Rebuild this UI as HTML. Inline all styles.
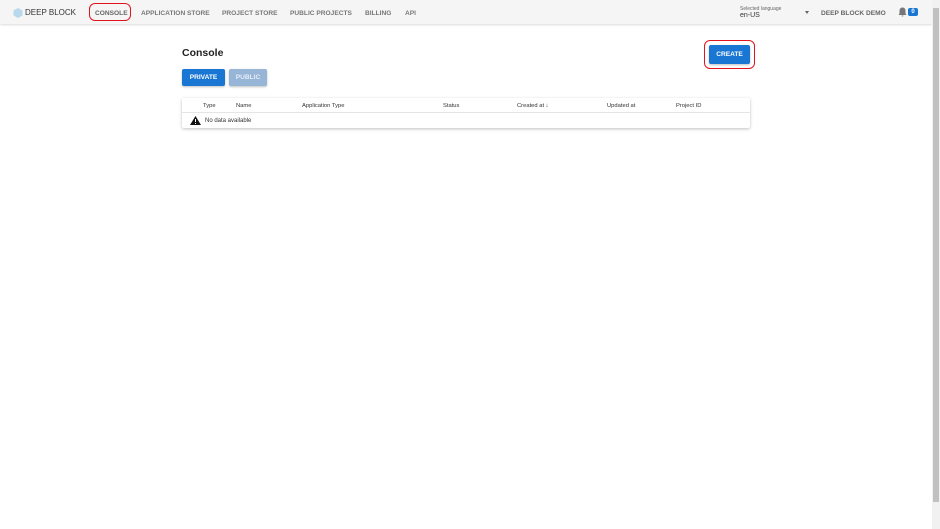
<!DOCTYPE html>
<html><head><style>
*{margin:0;padding:0;box-sizing:border-box}
body{width:940px;height:529px;overflow:hidden;background:#fff;font-family:"Liberation Sans",Arial,sans-serif;position:relative}
.hdr{position:absolute;left:0;top:0;width:932px;height:24px;background:#f5f5f5;box-shadow:0 1px 2px rgba(0,0,0,.15)}
.t{position:absolute;white-space:nowrap}
.nav{font-size:6.6px;font-weight:bold;color:#777;top:10px}
.sb{position:absolute;left:932px;top:0;width:8px;height:529px;background:#f1f1f1}
.th{position:absolute;left:933px;top:8px;width:6px;height:494px;background:#c1c1c1}
.btn{position:absolute;border-radius:2px;color:#fff;font-size:6.6px;font-weight:bold;text-align:center;box-shadow:0 1px 2px rgba(0,0,0,.25)}
.col{font-size:5.8px;color:#333;top:103px}
</style></head><body>
<div class="hdr"></div>
<svg class="t" style="left:13px;top:8px" width="10" height="10" viewBox="0 0 10 10"><polygon points="5,0 9.5,2.5 9.5,7.5 5,10 0.5,7.5 0.5,2.5" fill="#b8d8ee"/></svg>
<div class="t" style="left:25px;top:8px;font-size:8px;color:#333">DEEP BLOCK</div>
<div class="t" style="left:89px;top:3px;width:42px;height:18px;border:1.5px solid #e0141e;border-radius:6px"></div>
<div class="t nav" style="left:95px;color:#666">CONSOLE</div>
<div class="t nav" style="left:141px">APPLICATION STORE</div>
<div class="t nav" style="left:222px">PROJECT STORE</div>
<div class="t nav" style="left:290px">PUBLIC PROJECTS</div>
<div class="t nav" style="left:365px">BILLING</div>
<div class="t nav" style="left:405px">API</div>
<div class="t" style="left:740px;top:6px;font-size:5px;color:#666">Selected language</div>
<div class="t" style="left:740px;top:12px;font-size:7px;color:#333">en-US</div>
<div class="t" style="left:805px;top:11px;width:0;height:0;border-left:2.5px solid transparent;border-right:2.5px solid transparent;border-top:3px solid #666"></div>
<div class="t nav" style="left:821px;color:#666">DEEP BLOCK DEMO</div>
<svg class="t" style="left:898px;top:7px" width="9" height="10" viewBox="0 0 9 10"><path d="M4.5 0.5c-2 0-3 1.5-3 3.5v2.5L0.5 8h8l-1-1.5V4c0-2-1-3.5-3-3.5z M3.5 8.5h2a1 1 0 0 1-2 0z" fill="#777"/></svg>
<div class="t" style="left:908px;top:8px;width:10px;height:8px;background:#1976d2;border-radius:2px;color:#fff;font-size:6px;font-weight:bold;text-align:center;line-height:8px">0</div>
<div class="t" style="left:182px;top:47px;font-size:10.5px;font-weight:bold;color:#222">Console</div>
<div class="t" style="left:704px;top:40px;width:51px;height:29px;border:1.5px solid #e0141e;border-radius:6px"></div>
<div class="btn" style="left:709px;top:45px;width:41px;height:19px;line-height:19px;background:#1976d2">CREATE</div>
<div class="btn" style="left:182px;top:69px;width:43px;height:17px;line-height:17px;background:#1976d2">PRIVATE</div>
<div class="btn" style="left:229px;top:69px;width:38px;height:17px;line-height:17px;background:#97b5d6;color:#e5eef7">PUBLIC</div>
<div class="t" style="left:182px;top:98px;width:568px;height:30px;background:#fff;box-shadow:0 1px 3px rgba(0,0,0,.25);border-radius:2px"></div>
<div class="t" style="left:182px;top:112px;width:568px;height:1px;background:#e5e5e5"></div>
<div class="t col" style="left:203px">Type</div>
<div class="t col" style="left:236px">Name</div>
<div class="t col" style="left:302px">Application Type</div>
<div class="t col" style="left:443px">Status</div>
<div class="t col" style="left:517px">Created at ↓</div>
<div class="t col" style="left:607px">Updated at</div>
<div class="t col" style="left:676px">Project ID</div>
<svg class="t" style="left:190px;top:116px" width="11" height="9" viewBox="0 0 11 9"><polygon points="5.5,0 11,9 0,9" fill="#111"/><rect x="5" y="3" width="1" height="3" fill="#fff"/><rect x="5" y="7" width="1" height="1" fill="#fff"/></svg>
<div class="t" style="left:205px;top:118px;font-size:6px;color:#333">No data available</div>
<div class="sb"></div><div class="th"></div>
</body></html>
